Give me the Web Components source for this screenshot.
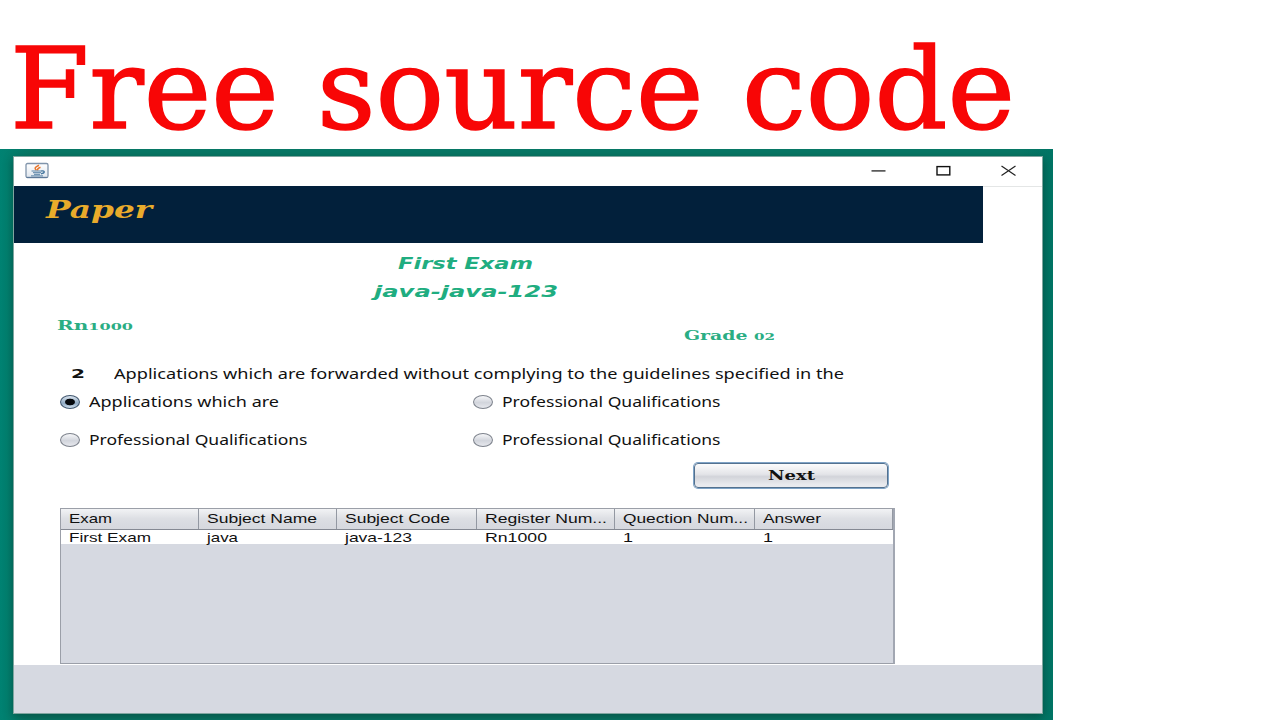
<!DOCTYPE html>
<html lang="en">
<head>
<meta charset="utf-8">
<title>Free source code</title>
<style>
  body {
    margin: 0;
    width: 1280px;
    height: 720px;
    overflow: hidden;
    background: #fff;
  }
</style>
</head>
<body>
<exam-page></exam-page>

<script>
/** Stretches its slotted text horizontally to the given width. */
class FitText extends HTMLElement {
  constructor() {
    super()
    this.attachShadow({ mode: 'open' }).innerHTML = `<style>
      :host { display: block; flex: none; white-space: nowrap; }
      span { display: inline-block; transform-origin: 0 0; }
    </style><span><slot></slot></span>`
  }

  connectedCallback() {
    const width = Number(this.getAttribute('width'))
    const span = this.shadowRoot.querySelector('span')
    this.style.width = `${width}px`
    span.style.transform = `scaleX(${width / span.getBoundingClientRect().width})`
  }
}

class TitleBar extends HTMLElement {
  constructor() {
    super()
    this.attachShadow({ mode: 'open' }).innerHTML = `<style>
      :host {
        display: flex;
        align-items: center;
        justify-content: space-between;
        box-sizing: border-box;
        height: 29px;
        padding: 0 26px 2px 11px;
        background: #fff;
      }
      svg { display: block; }
      .controls { display: flex; gap: 50px; }
    </style>
    <svg width="24" height="17" viewBox="0 0 24 17">
      <defs><linearGradient id="g" x2="0" y2="1"><stop stop-color="#fff"/><stop offset="1" stop-color="#dfe6ee"/></linearGradient></defs>
      <rect x="1" y="1.500" width="22" height="14" rx="1.500" fill="url(#g)" stroke="#8094ab" stroke-width="1.300"/>
      <path d="M1.500 15.500H22.500" stroke="#5c7898" stroke-width="1"/>
      <path d="M14 3.200C9 5.500 9.500 6.500 11.500 8.300M15.500 5.200C12 6.500 12.500 7.200 13 8.400" fill="none" stroke="#e8762b" stroke-width="1.500"/>
      <path d="M6.500 9H17M8 10.700H16M9 12.300H15M6 13.900H18" stroke="#5882a6" stroke-width="1"/>
      <path d="M16.500 9C20.500 8.200 20 11.500 16 11.700" fill="none" stroke="#4878a0" stroke-width="1.400"/>
    </svg>
    <div class="controls">
      <svg width="15" height="13"><path d="M0.500 6.900H14.500" stroke="#333" stroke-width="1.400"/></svg>
      <svg width="15" height="13"><rect x="1" y="2.600" width="12.800" height="8.300" fill="none" stroke="#111" stroke-width="1.400"/></svg>
      <svg width="15" height="13"><path d="M0.500 2L14.500 11.500M14.500 2L0.500 11.500" stroke="#222" stroke-width="1.200"/></svg>
    </div>`
  }
}

class ExamRadio extends HTMLElement {
  constructor() {
    super()
    this.attachShadow({ mode: 'open' }).innerHTML = `<style>
      :host { display: flex; align-items: center; gap: 8.5px; height: 20px; }
      i {
        box-sizing: border-box;
        width: 20px;
        height: 14px;
        border: 1px solid #7d828c;
        border-radius: 50%;
        background: linear-gradient(#f6f7f9, #d2d5dc 55%, #e6e8ed);
      }
      :host([checked]) i {
        border-color: #40566e;
        background:
          radial-gradient(ellipse 5.5px 3.7px at center, #05080c 80%, transparent 100%),
          linear-gradient(#dce6f0, #8fa9c2 60%, #cfe0ef);
      }
    </style><i></i><slot></slot>`
  }
}

class ExamButton extends HTMLElement {
  constructor() {
    super()
    this.attachShadow({ mode: 'open' }).innerHTML = `<style>
      :host {
        display: flex;
        align-items: center;
        justify-content: center;
        box-sizing: border-box;
        width: 194px;
        height: 25px;
        border: 1px solid #53718f;
        border-radius: 4px;
        box-shadow: 0 0 0 1px #7fa3c6;
        background: linear-gradient(#fbfbfc, #e3e4e8 45%, #d2d4da 55%, #e9eaee 90%);
        font: bold 13px/20px "DejaVu Serif", serif;
      }
    </style><slot></slot>`
  }
}

class AnswerTable extends HTMLElement {
  columns = [
    { name: 'Exam', width: 43, value: 'First Exam', valueWidth: 82 },
    { name: 'Subject Name', width: 110, value: 'java', valueWidth: 31 },
    { name: 'Subject Code', width: 105, value: 'java-123', valueWidth: 67 },
    { name: 'Register Num...', width: 122, value: 'Rn1000', valueWidth: 62 },
    { name: 'Quection Num...', width: 125, value: '1', valueWidth: 10 },
    { name: 'Answer', width: 58, value: '1', valueWidth: 10 },
  ]

  constructor() {
    super()
    const cells = (text, width) => this.columns
      .map((column) => `<div><fit-text width="${column[width]}">${column[text]}</fit-text></div>`)
      .join('')
    this.attachShadow({ mode: 'open' }).innerHTML = `<style>
      :host {
        display: block;
        box-sizing: border-box;
        width: 835px;
        height: 156px;
        border: 1px solid #9b9fa8;
        border-right: 2px solid #a2a7b2;
        background: #d6d9e1;
        font: 13px/20px "Liberation Sans", sans-serif;
        color: #111;
      }
      .row { display: grid; grid-template-columns: 138px 138px 140px 138px 140px 138px; }
      .row div { box-sizing: border-box; padding-left: 7.5px; }
      .head {
        height: 21px;
        box-sizing: border-box;
        border-bottom: 1px solid #858993;
        background: linear-gradient(#f2f3f5, #dcdee3 50%, #d6d8de);
      }
      .head div { border-right: 1px solid #9398a2; height: 20px; }
      .values { height: 14px; line-height: 16px; background: #fff; }
    </style>
    <div class="row head">${cells('name', 'width')}</div>
    <div class="row values">${cells('value', 'valueWidth')}</div>`
  }
}

class ExamWindow extends HTMLElement {
  constructor() {
    super()
    this.attachShadow({ mode: 'open' }).innerHTML = `<style>
      :host {
        display: flex;
        flex-direction: column;
        box-sizing: border-box;
        width: 1030px;
        height: 558px;
        border: 1px solid #7fa59f;
        background: #fff;
        box-shadow: 0 3px 9px rgba(0, 30, 25, .42);
        color: #111;
      }
      .top { height: 57px; background: linear-gradient(#e4e6e6 1px, #fff 1px); }
      .banner {
        box-sizing: border-box;
        width: 969px;
        height: 57px;
        padding: 7px 0 0 32px;
        background: #02203b;
        color: #e9ab2b;
        font: italic bold 25px/34px "DejaVu Serif", serif;
      }
      .sheet { flex: 1; font: 14px/20px "Noto Sans", sans-serif; }
      .heading {
        display: flex;
        flex-direction: column;
        align-items: center;
        width: 903px;
        padding-top: 7px;
        color: #20ad80;
        font: italic bold 16px/28px "DejaVu Sans", sans-serif;
      }
      .info {
        display: flex;
        justify-content: space-between;
        width: 718px;
        height: 30px;
        margin: 10px 0 0 43px;
        color: #2aad83;
        font: bold 12.5px/20px "DejaVu Serif", serif;
      }
      .info > :last-child { margin-top: 10px; }
      small { font-size: 10px; line-height: 1; }
      .question { display: flex; gap: 29px; margin: 18px 0 0 57px; }
      .question b { font: bold 13px/20px "DejaVu Sans", sans-serif; }
      .options {
        display: grid;
        grid-template-columns: 413px 413px;
        row-gap: 18px;
        margin: 8px 0 0 46px;
      }
      exam-button { margin: 13px 0 0 680px; }
      answer-table { margin: 20px 0 0 46px; }
      .footer { height: 48px; background: #d6d9e1; }
    </style>
    <title-bar></title-bar>
    <div class="top"><div class="banner"><fit-text width="106">Paper</fit-text></div></div>
    <div class="sheet">
      <div class="heading">
        <fit-text width="135">First Exam</fit-text>
        <fit-text width="184">java-java-123</fit-text>
      </div>
      <div class="info">
        <fit-text width="76">Rn<small>1000</small></fit-text>
        <fit-text width="91">Grade <small>02</small></fit-text>
      </div>
      <div class="question">
        <b><fit-text width="14">2</fit-text></b>
        <fit-text width="730">Applications which are forwarded without complying to the guidelines specified in the</fit-text>
      </div>
      <div class="options">
        <exam-radio checked><fit-text width="190">Applications which are</fit-text></exam-radio>
        <exam-radio><fit-text width="218.5">Professional Qualifications</fit-text></exam-radio>
        <exam-radio><fit-text width="218.5">Professional Qualifications</fit-text></exam-radio>
        <exam-radio><fit-text width="218.5">Professional Qualifications</fit-text></exam-radio>
      </div>
      <exam-button><fit-text width="47">Next</fit-text></exam-button>
      <answer-table></answer-table>
    </div>
    <div class="footer"></div>`
  }
}

class ExamPage extends HTMLElement {
  constructor() {
    super()
    this.attachShadow({ mode: 'open' }).innerHTML = `<style>
      :host { display: block; }
      header {
        box-sizing: border-box;
        height: 149px;
        padding: 14px 0 0 10px;
        color: #f80606;
        font: 112px/150px "DejaVu Serif", serif;
        word-spacing: 2px;
        -webkit-text-stroke: 1.6px #f80606;
      }
      main {
        box-sizing: border-box;
        width: 1053px;
        height: 571px;
        padding: 7px 0 0 13px;
        overflow: hidden;
        background: linear-gradient(90deg, #008272, #087866 3%, #087866 97%, #007565);
      }
    </style>
    <header><fit-text width="1005">Free source code</fit-text></header>
    <main><exam-window></exam-window></main>`
  }
}

customElements.define('fit-text', FitText)
customElements.define('title-bar', TitleBar)
customElements.define('exam-radio', ExamRadio)
customElements.define('exam-button', ExamButton)
customElements.define('answer-table', AnswerTable)
customElements.define('exam-window', ExamWindow)
customElements.define('exam-page', ExamPage)
</script>
</body>
</html>
